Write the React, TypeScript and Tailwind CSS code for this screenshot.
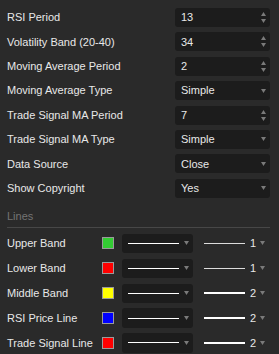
import React from 'react';

// Indicator settings panel: numeric inputs, selects and a "Lines" style section.

type Field =
  | { label: string; kind: 'number'; value: string }
  | { label: string; kind: 'select'; value: string };

const FIELDS: Field[] = [
  { label: 'RSI Period',              kind: 'number', value: '13' },
  { label: 'Volatility Band (20-40)', kind: 'number', value: '34' },
  { label: 'Moving Average Period',   kind: 'number', value: '2' },
  { label: 'Moving Average Type',     kind: 'select', value: 'Simple' },
  { label: 'Trade Signal MA Period',  kind: 'number', value: '7' },
  { label: 'Trade Signal MA Type',    kind: 'select', value: 'Simple' },
  { label: 'Data Source',             kind: 'select', value: 'Close' },
  { label: 'Show Copyright',          kind: 'select', value: 'Yes' },
];

const LINES = [
  { label: 'Upper Band',        color: '#33cc33', width: 1 },
  { label: 'Lower Band',        color: '#ff0000', width: 1 },
  { label: 'Middle Band',       color: '#ffff00', width: 2 },
  { label: 'RSI Price Line',    color: '#0000ff', width: 2 },
  { label: 'Trade Signal Line', color: '#ff0000', width: 2 },
];

function DownArrow() {
  return (
    <svg width="5" height="4" viewBox="0 0 5 4" className="block">
      <path d="M0 0h5L2.5 4z" fill="#7a7a7a" />
    </svg>
  );
}

function Spinner() {
  return (
    <div className="flex flex-col gap-[3px]">
      <svg width="5" height="4" viewBox="0 0 5 4" className="block">
        <path d="M0 4h5L2.5 0z" fill="#7a7a7a" />
      </svg>
      <DownArrow />
    </div>
  );
}

export default function App() {
  return (
    <div
      className="w-[279px] h-[354px] bg-[#2a2a2a] text-[11px] text-[#e8e8e8] pl-[7px] pr-[9px] pt-[8px] overflow-hidden"
      style={{ fontFamily: '"Liberation Sans", Arial, sans-serif' }}
    >
      <div className="flex flex-col gap-[5.4px]">
        {FIELDS.map((f) => (
          <div key={f.label} className="flex items-center justify-between h-[19px]">
            <span>{f.label}</span>
            <div className="w-[95px] h-[19px] rounded-[3px] bg-[#1c1c1c] flex items-center justify-between pl-[6px] pr-[4px]">
              <span>{f.value}</span>
              {f.kind === 'number' ? <Spinner /> : <DownArrow />}
            </div>
          </div>
        ))}
      </div>

      <div className="mt-[12px] text-[#747474] leading-[13px]">Lines</div>
      <div className="mt-[4px] h-px bg-[#474747]" />

      <div className="mt-[6px] flex flex-col gap-[5.6px]">
        {LINES.map((l) => (
          <div key={l.label} className="flex items-center h-[19.3px]">
            <span className="w-[95px]">{l.label}</span>
            <div
              className="w-[12px] h-[12px] border border-[#9a9a9a]"
              style={{ backgroundColor: l.color }}
            />
            <div className="ml-[8px] w-[71px] h-[19.3px] rounded-[3px] bg-[#1c1c1c] flex items-center pl-[6px] pr-[4px]">
              <div className="w-[51px] h-px bg-white" />
              <div className="ml-[5px]"><DownArrow /></div>
            </div>
            <div className="ml-[11px] flex items-center">
              <div
                className={l.width === 2 ? 'w-[41px] h-[2px] bg-white' : 'w-[41px] h-px bg-[#dcdcdc]'}
              />
              <span className="ml-[5px] w-[6px]">{l.width}</span>
              <div className="ml-[4px]"><DownArrow /></div>
            </div>
          </div>
        ))}
      </div>
    </div>
  );
}
